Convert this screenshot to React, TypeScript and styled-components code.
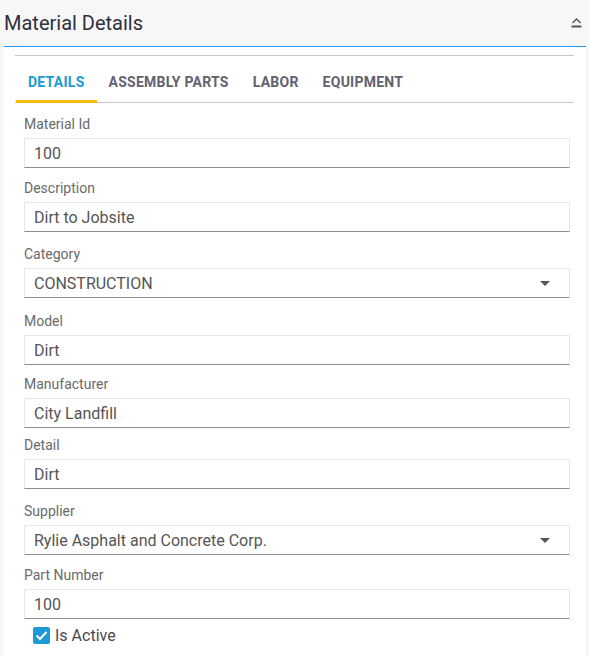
import React from "react";
import styled, { createGlobalStyle } from "styled-components";

const GlobalStyle = createGlobalStyle`
  html, body {
    margin: 0;
    padding: 0;
    background: #f7f7f7;
    font-family: Roboto, "Liberation Sans", sans-serif;
  }
`;

const Panel = styled.div`
  margin: 0 3px 0 4px;
  display: flex;
  flex-direction: column;
`;

const Header = styled.div`
  display: flex;
  align-items: center;
  justify-content: space-between;
  height: 46px;
  border-bottom: 1px solid #2196f3;
`;

const Title = styled.h2`
  margin: 0;
  font-size: 20px;
  font-weight: 400;
  color: #2f2f3d;
`;

const CollapseButton = styled.button`
  border: none;
  background: none;
  padding: 0;
  margin-right: 4px;
  width: 12px;
  height: 14px;
  display: flex;
  align-items: center;
  justify-content: center;
`;

const Body = styled.div`
  background: #fff;
  padding: 8px 12px 20px 11px;
`;

const Divider = styled.div`
  border-top: 1px solid #c8c8c8;
`;

const TabBar = styled.div`
  display: flex;
  height: 45px;
  margin-top: 1px;
  border-bottom: 1px solid #c8c8c8;
`;

const Tab = styled.div<{ active?: boolean }>`
  display: flex;
  align-items: center;
  padding: 6px 12px 0;
  margin-bottom: -1px;
  font-size: 14px;
  font-weight: 700;
  letter-spacing: 0.25px;
  color: ${p => (p.active ? "#1b9ad6" : "#62626f")};
  border-bottom: 3px solid ${p => (p.active ? "#f7bb0f" : "transparent")};
  margin-left: ${p => (p.active ? "1px" : "0")};
`;

const Form = styled.div`
  display: flex;
  flex-direction: column;
  padding: 11px 4px 0 9px;
`;

const Field = styled.div<{ extra?: number }>`
  display: flex;
  flex-direction: column;
  margin-bottom: ${p => 10 + (p.extra || 0)}px;
`;

const Label = styled.label`
  font-size: 14px;
  line-height: 20px;
  color: #6a6a6a;
  margin-bottom: 4px;
`;

const Input = styled.div`
  display: flex;
  align-items: center;
  height: 28px;
  padding: 0 9px;
  border: 1px solid #e6e6e6;
  border-bottom: 1px solid #8c8c9a;
  font-size: 16px;
  color: #555;
`;

const Caret = styled.span`
  margin-left: auto;
  margin-right: 10px;
  width: 0;
  height: 0;
  border-left: 5px solid transparent;
  border-right: 5px solid transparent;
  border-top: 5px solid #555;
`;

const CheckRow = styled.div`
  display: flex;
  align-items: center;
  gap: 5px;
  margin-top: -3px;
  padding-left: 9px;
  font-size: 16px;
  color: #4a4a4a;
`;

const Box = styled.span`
  width: 17px;
  height: 17px;
  border-radius: 2px;
  background: #1b9ad6;
  display: flex;
  align-items: center;
  justify-content: center;
`;

type FieldDef = { label: string; value: string; select?: boolean; extra?: number };

const fields: FieldDef[] = [
  { label: "Material Id", value: "100" },
  { label: "Description", value: "Dirt to Jobsite", extra: 2 },
  { label: "Category", value: "CONSTRUCTION", select: true, extra: 3 },
  { label: "Model", value: "Dirt", extra: -1 },
  { label: "Manufacturer", value: "City Landfill", extra: -3 },
  { label: "Detail", value: "Dirt", extra: 2 },
  { label: "Supplier", value: "Rylie Asphalt and Concrete Corp.", select: true },
  { label: "Part Number", value: "100" },
];

export default function App() {
  return (
    <>
      <GlobalStyle />
      <Panel>
        <Header>
          <Title>Material Details</Title>
          <CollapseButton>
            <svg width="11" height="12" viewBox="0 0 11 12">
              <path d="M1.5 6 L5.5 2 L9.5 6" fill="none" stroke="#555" strokeWidth="1.4" />
              <rect x="0.5" y="8.5" width="10" height="2" fill="#555" />
            </svg>
          </CollapseButton>
        </Header>
        <Body>
          <Divider />
          <TabBar>
            <Tab active>DETAILS</Tab>
            <Tab>ASSEMBLY PARTS</Tab>
            <Tab>LABOR</Tab>
            <Tab>EQUIPMENT</Tab>
          </TabBar>
          <Form>
            {fields.map(f => (
              <Field key={f.label} extra={f.extra}>
                <Label>{f.label}</Label>
                <Input>
                  {f.value}
                  {f.select && <Caret />}
                </Input>
              </Field>
            ))}
            <CheckRow>
              <Box>
                <svg width="13" height="11" viewBox="0 0 13 11">
                  <path d="M1.5 5.5 L5 9 L11.5 2" fill="none" stroke="#fff" strokeWidth="2" />
                </svg>
              </Box>
              Is Active
            </CheckRow>
          </Form>
        </Body>
      </Panel>
    </>
  );
}
